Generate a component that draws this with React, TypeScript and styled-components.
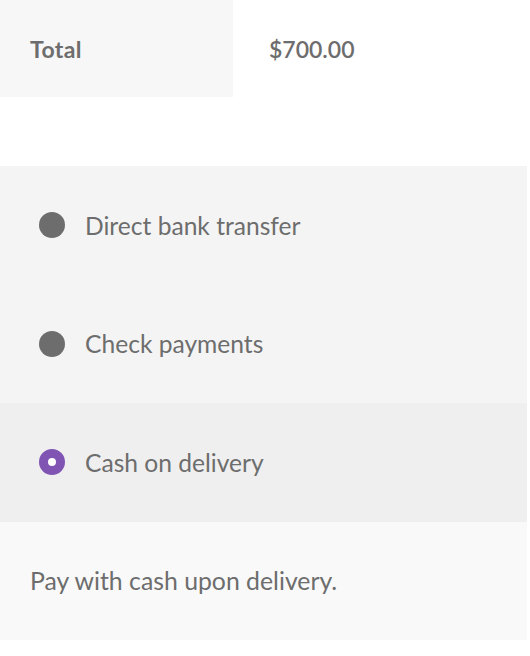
import { useState } from 'react';
import styled, { createGlobalStyle } from 'styled-components';

const GlobalStyle = createGlobalStyle`
  body {
    margin: 0;
    background: #fff;
    font-family: Lato, "Noto Sans", sans-serif;
    color: #6d6d6d;
  }
`;

const Page = styled.div`
  width: 527px;
`;

const TotalRow = styled.div`
  display: flex;
  height: 97px;
  align-items: stretch;
  font-size: 23px;
`;

const TotalLabel = styled.div`
  width: 233px;
  box-sizing: border-box;
  padding-left: 30px;
  display: flex;
  align-items: center;
  background: #f7f7f7;
  font-weight: 700;
  letter-spacing: 0.4px;
`;

const TotalValue = styled.div`
  flex: 1;
  padding-left: 36px;
  display: flex;
  align-items: center;
  font-weight: 600;
`;

const Methods = styled.ul`
  list-style: none;
  margin: 69px 0 0;
  padding: 0;
  background: #f4f4f4;
`;

const Method = styled.li<{ $active: boolean }>`
  height: 118.5px;
  display: flex;
  align-items: center;
  gap: 20px;
  padding-left: 39px;
  font-size: 24.6px;
  cursor: pointer;
  background: ${(p) => (p.$active ? '#efefef' : 'transparent')};
`;

const Radio = styled.span<{ $active: boolean }>`
  flex: none;
  width: 26px;
  height: 26px;
  border-radius: 50%;
  box-sizing: border-box;
  background: ${(p) => (p.$active ? '#fff' : '#6d6d6d')};
  border: ${(p) => (p.$active ? '9px solid #7f54b3' : 'none')};
`;

const Description = styled.div`
  height: 118px;
  display: flex;
  align-items: center;
  padding-left: 30px;
  font-size: 24.8px;
  background: #f9f9f9;
`;

const methods = [
  { id: 'bacs', label: 'Direct bank transfer' },
  { id: 'cheque', label: 'Check payments' },
  { id: 'cod', label: 'Cash on delivery', description: 'Pay with cash upon delivery.' },
];

export default function App() {
  const [selected, setSelected] = useState('cod');
  const current = methods.find((m) => m.id === selected);

  return (
    <Page>
      <GlobalStyle />
      <TotalRow>
        <TotalLabel>Total</TotalLabel>
        <TotalValue>$700.00</TotalValue>
      </TotalRow>
      <Methods>
        {methods.map((m) => (
          <Method key={m.id} $active={m.id === selected} onClick={() => setSelected(m.id)}>
            <Radio $active={m.id === selected} />
            {m.label}
          </Method>
        ))}
      </Methods>
      {current?.description && <Description>{current.description}</Description>}
    </Page>
  );
}
